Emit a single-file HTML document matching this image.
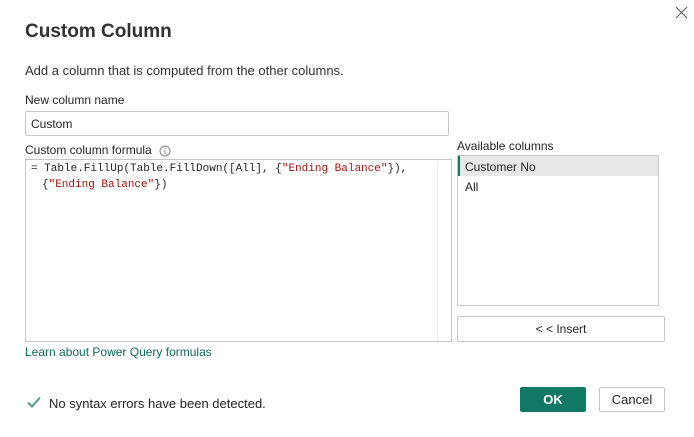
<!DOCTYPE html>
<html><head><style>
body{margin:0;width:694px;height:437px;background:#fff;font-family:"Liberation Sans",sans-serif;color:#252423;position:relative;overflow:hidden}
.a{position:absolute;white-space:nowrap}
.mono{font-family:"Liberation Mono",monospace;font-size:11px;color:#252423}
.s{color:#a31515}
</style></head><body>
<svg class="a" style="left:675px;top:6px" width="13" height="13" viewBox="0 0 13 13"><path d="M1 1L12 12M12 1L1 12" stroke="#605e5c" stroke-width="1.1"/></svg>
<div class="a" style="left:25px;top:21px;font-size:19px;font-weight:bold;color:#323130">Custom Column</div>
<div class="a" style="left:25px;top:63px;font-size:13px;color:#323130">Add a column that is computed from the other columns.</div>
<div class="a" style="left:25px;top:93px;font-size:12px">New column name</div>
<div class="a" style="left:25px;top:111px;width:422px;height:23px;border:1px solid #c8c6c4;border-radius:2px"></div>
<div class="a" style="left:31px;top:117px;font-size:12px">Custom</div>
<div class="a" style="left:25px;top:143px;font-size:12px">Custom column formula</div>
<svg class="a" style="left:159px;top:145px" width="12" height="12" viewBox="0 0 12 12"><circle cx="6" cy="6" r="5" fill="none" stroke="#8a8886"/><path d="M6 5v4M6 3v1" stroke="#8a8886"/></svg>
<div class="a" style="left:25px;top:159px;width:425px;height:181px;border:1px solid #c8c6c4;background:#fffffd"></div>
<div class="a" style="left:437px;top:163px;width:1px;height:178px;background:#e8e8e8"></div>
<div class="a mono" style="left:31px;top:163px">= Table.FillUp(Table.FillDown([All], {<span class="s">"Ending Balance"</span>}),</div>
<div class="a mono" style="left:42px;top:179px">{<span class="s">"Ending Balance"</span>})</div>
<div class="a" style="left:25px;top:345px;font-size:12px;color:#0e6b5a">Learn about Power Query formulas</div>
<div class="a" style="left:457px;top:139px;font-size:12px">Available columns</div>
<div class="a" style="left:457px;top:155px;width:200px;height:149px;border:1px solid #c8c6c4"></div>
<div class="a" style="left:458px;top:156px;width:200px;height:20px;background:#e8e8e8;border-left:2px solid #117865;box-sizing:border-box"></div>
<div class="a" style="left:465px;top:160px;font-size:12px">Customer No</div>
<div class="a" style="left:465px;top:180px;font-size:12px">All</div>
<div class="a" style="left:457px;top:316px;width:206px;height:24px;border:1px solid #c8c6c4;border-radius:2px;text-align:center;line-height:24px;font-size:12px">&lt; &lt; Insert</div>
<svg class="a" style="left:27px;top:396px" width="14" height="12" viewBox="0 0 14 12"><path d="M1 6.5L5 10.5L13 1.5" fill="none" stroke="#5a9e8a" stroke-width="2"/></svg>
<div class="a" style="left:49px;top:396px;font-size:13px">No syntax errors have been detected.</div>
<div class="a" style="left:520px;top:387px;width:66px;height:25px;background:#117865;border-radius:2px;color:#fff;font-weight:bold;font-size:13px;text-align:center;line-height:25px">OK</div>
<div class="a" style="left:599px;top:387px;width:64px;height:23px;border:1px solid #c8c6c4;border-radius:2px;font-size:13px;text-align:center;line-height:23px">Cancel</div>
</body></html>
